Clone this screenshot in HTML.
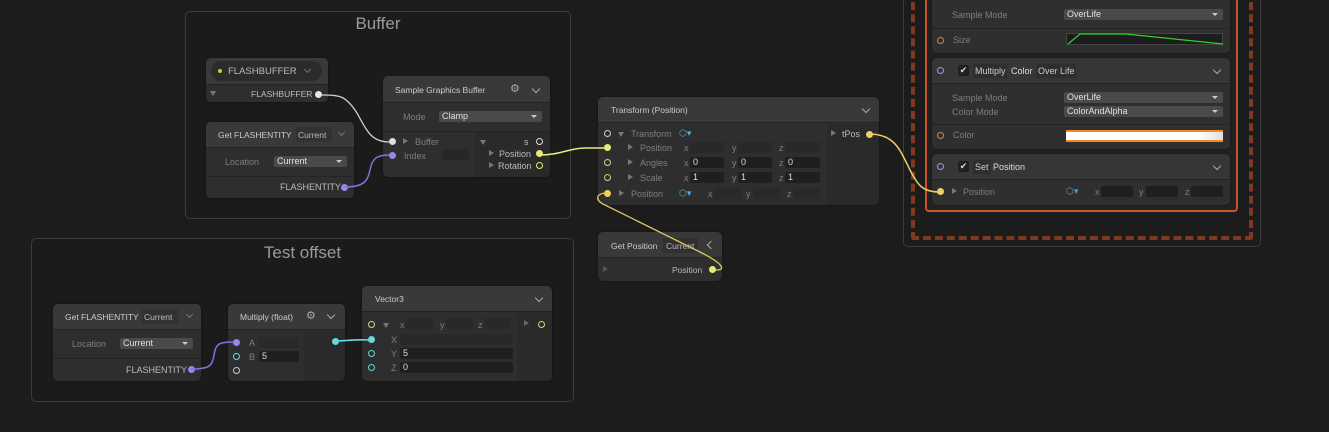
<!DOCTYPE html>
<html><head><meta charset="utf-8"><style>
*{box-sizing:border-box;margin:0;padding:0}
body{width:1329px;height:432px;background:#1c1c1c;position:relative;overflow:hidden;font-family:"Liberation Sans",sans-serif;font-size:9px;color:#c4c4c4}
.a{position:absolute}
.grp{position:absolute;border:1px solid #3b3b3b;border-radius:5px;background:#1b1b1b}
.gt{position:absolute;left:0;right:0;text-align:center;font-size:17px;color:#9a9a9a}
.node{position:absolute;background:#2e2e2e;border-radius:5px;overflow:hidden;box-shadow:0 0 2px #111}
.hd{position:absolute;left:0;right:0;top:0;background:#393939;border-bottom:1px solid #232323}
.t{position:absolute;white-space:nowrap;line-height:11px}
.dim{color:#7e7e7e}
.p{position:absolute;width:7px;height:7px;border-radius:50%}
.pf{background:currentColor}
.po{border:1.3px solid currentColor}
.fld{position:absolute;background:#1f1f1f;border-radius:2px;height:11px;color:#ddd;padding-left:3px;line-height:11px}
.dd{position:absolute;background:#4a4a4a;border-radius:2px;height:11px;color:#e0e0e0;padding-left:3px;line-height:11px}
.dd:after{content:"";position:absolute;right:5px;top:4px;border:3px solid transparent;border-top:3px solid #ccc}
.chev{position:absolute;width:6px;height:6px;border-right:1.4px solid #aaa;border-bottom:1.4px solid #aaa;transform:rotate(45deg)}
.tri{position:absolute;border:3.5px solid transparent;border-left:5px solid #777}
.trd{position:absolute;border:3.5px solid transparent;border-top:5px solid #777}
.gear{position:absolute;font-size:11px;color:#aaa;line-height:11px}
.sm{font-size:8.5px}
</style></head><body>

<div class="grp" style="left:185px;top:11px;width:386px;height:208px"><div class="gt" style="top:2px">Buffer</div></div>
<div class="grp" style="left:31px;top:238px;width:543px;height:164px"><div class="gt" style="top:4px">Test offset</div></div>

<div class="a" style="left:903px;top:-5px;width:358px;height:252px;border:1px solid #3b3b3b;border-radius:5px"></div>
<div class="a" style="left:911px;top:-10px;width:342px;height:250px;border:4px dashed #7e3a20;border-radius:3px"></div>
<div class="a" style="left:925px;top:-5px;width:313px;height:217px;border:2px solid #c4572c;border-radius:4px;background:#222"></div>
<div class="node" style="left:932px;top:-5px;width:298px;height:58px;background:#2f2f2f">
 <div class="a" style="left:0;right:0;top:33px;border-top:1px solid #242424"></div>
 <div class="t dim" style="left:20px;top:15px">Sample Mode</div>
 <div class="dd" style="left:132px;top:14px;width:159px">OverLife</div>
 <div class="p po" style="left:5px;top:42px;color:#d08a4a"></div>
 <div class="t dim" style="left:21px;top:40px">Size</div>
 <div class="a" style="left:134px;top:38px;width:157px;height:12px;background:#1d1d1d;border:1px solid #444"></div>
 <svg class="a" style="left:134px;top:38px" width="157" height="12"><polyline points="2,11 14,1 60,1 157,11" fill="none" stroke="#2ed12e" stroke-width="1.2"/></svg>
</div>
<div class="node" style="left:932px;top:58px;width:298px;height:91px;background:#2f2f2f">
 <div class="hd" style="height:26px;background:#363636"></div>
 <div class="p po" style="left:5px;top:9px;color:#b08ee0"></div>
 <div class="a" style="left:26px;top:7px;width:11px;height:11px;background:#1f1f1f;border-radius:2px;color:#ddd;font-size:9px;text-align:center;line-height:11px">✔</div>
 <div class="a" style="left:41px;top:6px;width:34px;height:14px;background:#2e2e2e"></div>
 <div class="t" style="left:43px;top:8px;color:#ccc">Multiply</div>
 <div class="t" style="left:79px;top:8px;color:#ddd">Color</div>
 <div class="a" style="left:104px;top:6px;width:40px;height:14px;background:#2e2e2e"></div>
 <div class="t" style="left:106px;top:8px;color:#ccc">Over Life</div>
 <div class="chev" style="left:282px;top:9px"></div>
 <div class="t dim" style="left:20px;top:35px">Sample Mode</div>
 <div class="dd" style="left:132px;top:34px;width:159px">OverLife</div>
 <div class="t dim" style="left:20px;top:49px">Color Mode</div>
 <div class="dd" style="left:132px;top:48px;width:159px">ColorAndAlpha</div>
 <div class="a" style="left:0;right:0;top:66px;border-top:1px solid #242424"></div>
 <div class="p po" style="left:5px;top:74px;color:#d08a4a"></div>
 <div class="t dim" style="left:21px;top:72px">Color</div>
 <div class="a" style="left:134px;top:72px;width:157px;height:12px;background:linear-gradient(90deg,#fff 0,#fff 85%,#ddd 100%);border-top:2px solid #f08a20;border-bottom:2px solid #f08a20"></div>
</div>
<div class="node" style="left:932px;top:154px;width:298px;height:51px;background:#2f2f2f">
 <div class="hd" style="height:26px;background:#363636"></div>
 <div class="p po" style="left:5px;top:9px;color:#b08ee0"></div>
 <div class="a" style="left:26px;top:7px;width:11px;height:11px;background:#1f1f1f;border-radius:2px;color:#ddd;text-align:center;line-height:11px">✔</div>
 <div class="a" style="left:41px;top:6px;width:18px;height:14px;background:#2e2e2e"></div>
 <div class="t" style="left:43px;top:8px;color:#ccc">Set</div>
 <div class="t" style="left:61px;top:8px;color:#ddd">Position</div>
 <div class="chev" style="left:282px;top:9px"></div>
 <div class="p pf" style="left:5px;top:34px;color:#f2cf62"></div>
 <div class="tri" style="left:20px;top:34px"></div>
 <div class="t dim" style="left:31px;top:33px">Position</div>
 <div class="t" style="left:134px;top:32px;color:#5aa0c8">⬡▾</div>
 <div class="t dim" style="left:163px;top:33px">x</div><div class="fld" style="left:169px;top:32px;width:32px"></div>
 <div class="t dim" style="left:207px;top:33px">y</div><div class="fld" style="left:214px;top:32px;width:32px"></div>
 <div class="t dim" style="left:253px;top:33px">z</div><div class="fld" style="left:259px;top:32px;width:32px"></div>
</div>

<div class="node" style="left:206px;top:58px;width:122px;height:44px">
 <div class="hd" style="height:27px"></div>
 <div class="a" style="left:5px;top:3px;width:111px;height:20px;border-radius:10px;background:#2b2b2b"></div>
 <div class="p pf" style="left:12px;top:11px;width:4px;height:4px;color:#a6e22e"></div>
 <div class="t" style="left:22px;top:8px;font-size:9.5px;color:#bbb">FLASHBUFFER</div>
 <div class="chev" style="left:99px;top:9px;width:5px;height:5px;border-color:#777"></div>
 <div class="trd" style="left:4px;top:33px"></div>
 <div class="t sm" style="left:45px;top:31px;color:#bbb">FLASHBUFFER</div>
 <div class="p pf" style="left:109px;top:33px;color:#e6e6e6"></div>
</div>

<div class="node" style="left:206px;top:122px;width:148px;height:76px">
 <div class="hd" style="height:26px"></div>
 <div class="t sm" style="left:12px;top:8px;color:#ccc">Get FLASHENTITY</div>
 <div class="a" style="left:90px;top:5px;width:36px;height:15px;background:#323232"></div>
 <div class="t sm" style="left:92px;top:8px;color:#bbb">Current</div>
 <div class="chev" style="left:133px;top:8px;width:5px;height:5px;border-color:#777"></div>
 <div class="t dim" style="left:19px;top:35px">Location</div>
 <div class="dd" style="left:68px;top:34px;width:73px">Current</div>
 <div class="a" style="left:0;right:0;top:54px;border-top:1px solid #242424"></div>
 <div class="t" style="left:74px;top:60px;color:#bbb">FLASHENTITY</div>
 <div class="p pf" style="left:135px;top:62px;color:#9a84ee"></div>
</div>

<div class="node" style="left:383px;top:76px;width:167px;height:101px">
 <div class="hd" style="height:27px"></div>
 <div class="t sm" style="left:12px;top:9px;color:#ccc">Sample Graphics Buffer</div>
 <div class="gear" style="left:127px;top:8px">⚙</div>
 <div class="chev" style="left:150px;top:10px"></div>
 <div class="t dim" style="left:20px;top:36px">Mode</div>
 <div class="dd" style="left:56px;top:35px;width:103px">Clamp</div>
 <div class="a" style="left:0;right:0;top:55px;border-top:1px solid #242424"></div>
 <div class="a" style="left:92px;top:56px;right:0;bottom:0;background:#2a2a2a"></div>
 <div class="p pf" style="left:6px;top:62px;color:#ddd"></div>
 <div class="tri" style="left:20px;top:62px"></div>
 <div class="t dim" style="left:32px;top:61px">Buffer</div>
 <div class="p pf" style="left:6px;top:76px;color:#9a84ee"></div>
 <div class="t dim" style="left:21px;top:75px">Index</div>
 <div class="fld" style="left:59px;top:73px;width:27px;background:#272727"></div>
 <div class="trd" style="left:97px;top:64px"></div>
 <div class="t" style="left:141px;top:61px;color:#bbb">s</div>
 <div class="p po" style="left:153px;top:62px;color:#ddd"></div>
 <div class="tri" style="left:106px;top:74px"></div>
 <div class="t" style="left:116px;top:73px;color:#bbb">Position</div>
 <div class="p pf" style="left:153px;top:74px;color:#e8ea78"></div>
 <div class="tri" style="left:106px;top:86px"></div>
 <div class="t" style="left:115px;top:85px;color:#bbb">Rotation</div>
 <div class="p po" style="left:153px;top:86px;color:#e8ea78"></div>
</div>

<div class="node" style="left:598px;top:97px;width:281px;height:108px">
 <div class="hd" style="height:26px"></div>
 <div class="t sm" style="left:13px;top:8px;color:#ccc">Transform (Position)</div>
 <div class="chev" style="left:265px;top:9px"></div>
 <div class="a" style="left:229px;top:27px;right:0;bottom:0;background:#2a2a2a"></div>
 <div class="p po" style="left:6px;top:33px;color:#ccc"></div>
 <div class="trd" style="left:20px;top:35px"></div>
 <div class="t dim" style="left:33px;top:32px">Transform</div>
 <div class="t" style="left:81px;top:31px;color:#4fb0e0">⬡▾</div>
 <div class="p pf" style="left:6px;top:47px;color:#e8ea78"></div>
 <div class="tri" style="left:30px;top:47px"></div><div class="t dim" style="left:42px;top:46px">Position</div>
 <div class="p po" style="left:6px;top:62px;color:#d4d478"></div>
 <div class="tri" style="left:30px;top:62px"></div><div class="t dim" style="left:42px;top:61px">Angles</div>
 <div class="p po" style="left:6px;top:77px;color:#d4d478"></div>
 <div class="tri" style="left:30px;top:77px"></div><div class="t dim" style="left:42px;top:76px">Scale</div>
 <div class="p pf" style="left:6px;top:93px;color:#f2cf62"></div>
 <div class="tri" style="left:21px;top:93px"></div><div class="t dim" style="left:33px;top:92px">Position</div>
 <div class="t" style="left:81px;top:91px;color:#4fb0e0">⬡▾</div>
 <div class="t dim" style="left:86px;top:46px">x</div><div class="fld" style="left:92px;top:45px;width:34px;background:#292929"></div>
 <div class="t dim" style="left:134px;top:46px">y</div><div class="fld" style="left:140px;top:45px;width:34px;background:#292929"></div>
 <div class="t dim" style="left:181px;top:46px">z</div><div class="fld" style="left:187px;top:45px;width:35px;background:#292929"></div>
 <div class="t dim" style="left:86px;top:61px">x</div><div class="fld" style="left:92px;top:60px;width:34px">0</div>
 <div class="t dim" style="left:134px;top:61px">y</div><div class="fld" style="left:140px;top:60px;width:34px">0</div>
 <div class="t dim" style="left:181px;top:61px">z</div><div class="fld" style="left:187px;top:60px;width:35px">0</div>
 <div class="t dim" style="left:86px;top:76px">x</div><div class="fld" style="left:92px;top:75px;width:34px">1</div>
 <div class="t dim" style="left:134px;top:76px">y</div><div class="fld" style="left:140px;top:75px;width:34px">1</div>
 <div class="t dim" style="left:181px;top:76px">z</div><div class="fld" style="left:187px;top:75px;width:35px">1</div>
 <div class="t dim" style="left:110px;top:92px">x</div><div class="fld" style="left:116px;top:91px;width:27px;background:#292929"></div>
 <div class="t dim" style="left:148px;top:92px">y</div><div class="fld" style="left:155px;top:91px;width:27px;background:#292929"></div>
 <div class="t dim" style="left:189px;top:92px">z</div><div class="fld" style="left:195px;top:91px;width:27px;background:#292929"></div>
 <div class="tri" style="left:233px;top:33px"></div>
 <div class="t" style="left:244px;top:32px;color:#bbb">tPos</div>
 <div class="p pf" style="left:268px;top:34px;color:#f2cf62"></div>
</div>

<div class="node" style="left:598px;top:232px;width:124px;height:49px">
 <div class="hd" style="height:26px"></div>
 <div class="t sm" style="left:13px;top:9px;color:#ccc">Get Position</div>
 <div class="a" style="left:65px;top:6px;width:35px;height:15px;background:#303030"></div>
 <div class="t sm" style="left:68px;top:9px;color:#bbb">Current</div>
 <div class="chev" style="left:110px;top:10px;transform:rotate(135deg)"></div>
 <div class="tri" style="left:5px;top:34px;border-left-color:#555"></div>
 <div class="t sm" style="left:74px;top:33px;color:#bbb">Position</div>
 <div class="p pf" style="left:111px;top:34px;color:#e8ea78"></div>
</div>

<div class="node" style="left:53px;top:304px;width:148px;height:77px">
 <div class="hd" style="height:26px"></div>
 <div class="t sm" style="left:12px;top:8px;color:#ccc">Get FLASHENTITY</div>
 <div class="a" style="left:89px;top:5px;width:36px;height:15px;background:#323232"></div>
 <div class="t sm" style="left:91px;top:8px;color:#bbb">Current</div>
 <div class="chev" style="left:134px;top:8px;width:5px;height:5px;border-color:#777"></div>
 <div class="t dim" style="left:19px;top:35px">Location</div>
 <div class="dd" style="left:67px;top:34px;width:73px">Current</div>
 <div class="a" style="left:0;right:0;top:54px;border-top:1px solid #242424"></div>
 <div class="t" style="left:73px;top:61px;color:#bbb">FLASHENTITY</div>
 <div class="p pf" style="left:135px;top:62px;color:#9a84ee"></div>
</div>

<div class="node" style="left:228px;top:304px;width:117px;height:77px">
 <div class="hd" style="height:26px"></div>
 <div class="t sm" style="left:12px;top:8px;color:#ccc">Multiply (float)</div>
 <div class="gear" style="left:78px;top:7px">⚙</div>
 <div class="chev" style="left:100px;top:8px"></div>
 <div class="a" style="left:76px;top:27px;right:0;bottom:0;background:#2a2a2a"></div>
 <div class="p pf" style="left:5px;top:35px;color:#9a84ee"></div>
 <div class="t dim" style="left:21px;top:34px">A</div><div class="fld" style="left:31px;top:33px;width:40px;background:#292929"></div>
 <div class="p po" style="left:5px;top:49px;color:#6ad8d8"></div>
 <div class="t dim" style="left:21px;top:48px">B</div><div class="fld" style="left:31px;top:47px;width:40px">5</div>
 <div class="p po" style="left:5px;top:63px;color:#ccc"></div>
 <div class="p pf" style="left:104px;top:34px;color:#6ad8d8"></div>
</div>

<div class="node" style="left:362px;top:286px;width:190px;height:95px">
 <div class="hd" style="height:26px"></div>
 <div class="t sm" style="left:13px;top:8px;color:#ccc">Vector3</div>
 <div class="chev" style="left:174px;top:9px"></div>
 <div class="a" style="left:155px;top:27px;right:0;bottom:0;background:#2a2a2a"></div>
 <div class="p po" style="left:6px;top:35px;color:#d4d478"></div>
 <div class="trd" style="left:21px;top:37px"></div>
 <div class="t dim" style="left:38px;top:34px">x</div><div class="fld" style="left:44px;top:32px;width:27px;background:#292929"></div>
 <div class="t dim" style="left:78px;top:34px">y</div><div class="fld" style="left:84px;top:32px;width:27px;background:#292929"></div>
 <div class="t dim" style="left:116px;top:34px">z</div><div class="fld" style="left:122px;top:32px;width:27px;background:#292929"></div>
 <div class="p pf" style="left:6px;top:50px;color:#6ad8d8"></div>
 <div class="t dim" style="left:29px;top:49px">X</div><div class="fld" style="left:38px;top:48px;width:113px;background:#292929"></div>
 <div class="p po" style="left:6px;top:64px;color:#6ad8d8"></div>
 <div class="t dim" style="left:29px;top:63px">Y</div><div class="fld" style="left:38px;top:62px;width:113px">5</div>
 <div class="p po" style="left:6px;top:78px;color:#6ad8d8"></div>
 <div class="t dim" style="left:29px;top:77px">Z</div><div class="fld" style="left:38px;top:76px;width:113px">0</div>
 <div class="tri" style="left:162px;top:34px;border-left-color:#666"></div>
 <div class="p po" style="left:176px;top:35px;color:#d4d478"></div>
</div>

<svg class="a" style="left:0;top:0" width="1329" height="432" fill="none">
 <path d="M322,95 C340,95 345,96 355,110 C365,125 368,142 389,142" stroke="#cfcfcf" stroke-width="1.3"/>
 <path d="M345,187 C365,187 368,180 370,170 C372,160 375,155 389,155" stroke="#8a6ee0" stroke-width="1.5"/>
 <path d="M540,155 C560,155 570,148 585,148 L607,148" stroke="#e8ea78" stroke-width="1.5"/>
 <path d="M869,134 C895,134 900,150 910,170 C918,185 922,192 940,192" stroke="#f2cf62" stroke-width="1.5"/>
 <path d="M607,193 C596,193 594,200 605,205 L700,252 C720,262 728,270 716,270" stroke="#d9c760" stroke-width="1.3"/>
 <path d="M191,369 C210,369 212,366 214,355 C216,344 218,342 234,342" stroke="#8a6ee0" stroke-width="1.5"/>
 <path d="M335,341 C350,341 352,339 370,340" stroke="#6ad8d8" stroke-width="1.6"/>
</svg>
</body></html>
